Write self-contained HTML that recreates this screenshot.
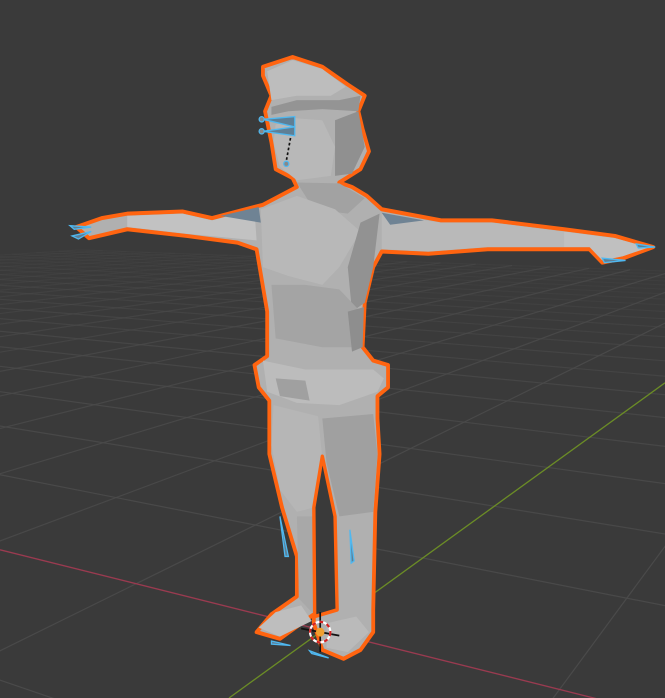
<!DOCTYPE html>
<html><head><meta charset="utf-8"><style>
html,body{margin:0;padding:0;background:#3a3a3a;overflow:hidden;width:665px;height:698px}
#w{width:665px;height:698px;overflow:hidden;position:relative}
svg{display:block;position:absolute;left:0;top:0}
</style></head><body><div id="w">
<svg id="s" width="665" height="698" viewBox="0 0 1568 1568" preserveAspectRatio="none">
<rect width="1568" height="1568" fill="#3a3a3a"/>
<g id="grid" stroke="#4a4a4a" stroke-width="1.2"></g>
<line x1="0" y1="1235" x2="1568" y2="1608" stroke="#9a3a50" stroke-width="3"/>
<line x1="540" y1="1568" x2="1568" y2="860" stroke="#6b8c26" stroke-width="3"/>
<polygon fill="#b0b0b0" stroke="#ff6410" stroke-width="9" stroke-linejoin="round" points="620,150 690,128 760,150 820,190 860,215 845,250 855,290 870,340 850,380 800,410 830,420 865,440 900,470 1040,495 1160,495 1330,515 1450,530 1540,555 1470,580 1420,590 1390,560 1330,560 1150,560 1010,570 900,565 880,600 860,680 855,780 880,810 915,820 915,870 890,890 890,940 895,1020 885,1150 880,1370 880,1420 850,1460 810,1480 760,1460 740,1400 740,1380 660,1435 605,1420 640,1380 700,1340 700,1250 665,1140 635,1020 635,900 610,870 600,820 630,800 630,700 605,560 560,545 440,530 300,515 210,535 180,510 240,490 300,480 430,475 500,490 620,460 700,420 690,400 650,380 640,320 625,250 640,215 620,170"/>
<g>
<polygon fill="#bdbdbd" points="630,160 690,135 760,155 815,195 780,215 700,215 640,225"/>
<polygon fill="#949494" points="640,240 700,225 800,225 850,215 845,250 760,245 680,250 640,258"/>
<polygon fill="#b8b8b8" points="650,280 690,265 760,270 790,330 780,395 700,405 660,375 645,320"/>
<polygon fill="#909090" points="790,270 845,250 860,330 830,390 790,395"/>
<polygon fill="#a2a2a2" points="700,410 800,412 860,445 820,480 740,470"/>
<polygon fill="#b8b8b8" points="615,470 700,440 790,470 850,520 800,600 760,640 680,620 620,600"/>
<polygon fill="#929292" points="850,500 895,480 880,600 860,680 830,700 820,600"/>
<polygon fill="#a4a4a4" points="640,640 720,640 800,650 850,700 850,780 760,780 650,760"/>
<polygon fill="#8e8e8e" points="820,700 858,690 855,780 830,790"/>
<polygon fill="#bcbcbc" points="620,810 720,830 880,830 905,850 890,880 800,910 700,905 630,880"/>
<polygon fill="#a0a0a0" points="650,850 720,855 730,900 660,890"/>
<polygon fill="#b6b6b6" points="645,910 750,935 760,1030 740,1140 700,1150 660,1100 640,1000"/>
<polygon fill="#a0a0a0" points="760,940 880,930 890,1020 880,1150 800,1160 770,1040"/>
<polygon fill="#a8a8a8" points="700,1160 740,1160 740,1380 705,1345"/>
<polygon fill="#bebebe" points="610,1410 650,1375 710,1360 735,1395 660,1430"/>
<polygon fill="#bababa" points="770,1400 840,1385 870,1420 820,1465 770,1455"/>
<polygon fill="#c2c2c2" points="300,485 430,480 500,495 600,470 605,540 440,525 300,510"/>
<polygon fill="#b9b9b9" points="900,480 1040,500 1160,500 1330,520 1330,555 1150,555 1010,565 900,560"/>
<polygon fill="#c0c0c0" points="1330,520 1450,535 1530,556 1470,575 1420,585 1390,555 1330,555"/>
<polygon fill="#6f8394" points="520,485 610,465 615,500"/>
<polygon fill="#6f8394" points="900,478 1000,495 920,505"/>
</g>
<polygon fill="#3a3a3a" stroke="#ff6410" stroke-width="8" stroke-linejoin="round" points="760,1025 790,1160 795,1370 742,1385 740,1140"/>
<g stroke="#4fb8f0" stroke-width="3" fill="#5f7f95">
<polygon points="620,268 695,262 695,285"/>
<polygon points="620,295 695,285 695,305"/>
<circle cx="617" cy="268" r="6" fill="#888"/>
<circle cx="617" cy="295" r="6" fill="#888"/>
<circle cx="675" cy="368" r="6" fill="#888"/>
<polygon points="165,507 215,510 175,515"/>
<polygon points="170,530 215,520 185,537"/>
<polygon points="1500,548 1545,555 1505,557"/>
<polygon points="1420,580 1475,585 1425,590"/>
<polygon points="660,1160 680,1250 672,1250"/>
<polygon points="825,1190 835,1260 828,1265"/>
<polygon points="640,1440 685,1450 640,1447"/>
<polygon points="730,1462 775,1478 735,1468"/>
</g>
<line x1="685" y1="310" x2="675" y2="362" stroke="#111" stroke-width="4" stroke-dasharray="6,5"/>
<g transform="translate(755,1420)">
<line x1="0" y1="-45" x2="0" y2="45" stroke="#111" stroke-width="4"/>
<line x1="-45" y1="-8" x2="45" y2="8" stroke="#111" stroke-width="4"/>
<ellipse rx="24" ry="23" fill="none" stroke="#fff" stroke-width="5"/>
<ellipse rx="24" ry="23" fill="none" stroke="#d42020" stroke-width="5" stroke-dasharray="9,9"/>
<ellipse rx="10" ry="10" fill="#f0a030"/>
</g>
</svg></div>
<script>
(function(){
var g=document.getElementById('grid');
var O=[760,1416],VA=[-3340,440],VB=[2177,440],a=0.12,b=0.2;
function P(u,v){var d=1+u*a+v*b;return [(O[0]+u*a*VA[0]+v*b*VB[0])/d,(O[1]+u*a*VA[1]+v*b*VB[1])/d];}
function ln(p,q,op){var l=document.createElementNS('http://www.w3.org/2000/svg','line');l.setAttribute('x1',p[0]);l.setAttribute('y1',p[1]);l.setAttribute('x2',q[0]);l.setAttribute('y2',q[1]);l.setAttribute('vector-effect','non-scaling-stroke');l.setAttribute('stroke-opacity',op);g.appendChild(l);}
var M=22;
for(var u=-8;u<=M;u++){if(u==0)continue;var v0=(0.05-1-u*a)/b;ln(P(u,M),P(u,v0),Math.max(0.25,1-Math.max(0,u)/M));}
for(var v=-8;v<=M;v++){if(v==0)continue;var u0=(0.05-1-v*b)/a;ln(P(M,v),P(u0,v),Math.max(0.25,1-Math.max(0,v)/M));}
})();
</script>
</body></html>
